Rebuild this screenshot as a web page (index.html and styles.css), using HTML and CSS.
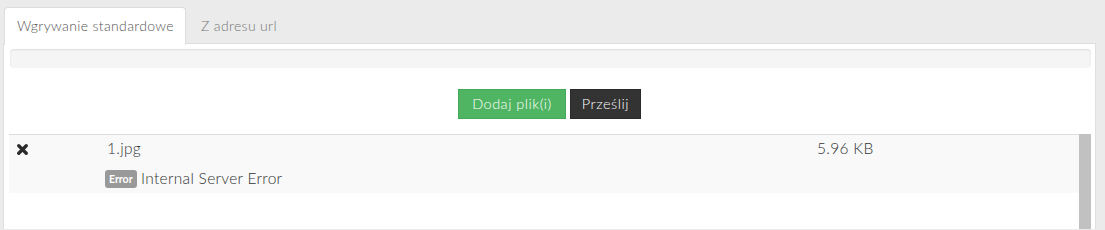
FILE: index.html
```html
<!DOCTYPE html>
<html lang="pl">
<head>
<meta charset="utf-8">
<link rel="stylesheet" href="styles.css">
</head>
<body>
<div class="page">
  <ul class="tabs">
    <li class="tab active">Wgrywanie standardowe</li>
    <li class="tab">Z adresu url</li>
  </ul>
  <div class="panel">
    <div class="progress"></div>
    <div class="actions">
      <button class="btn btn-success">Dodaj plik(i)</button>
      <button class="btn btn-dark">Prześlij</button>
    </div>
    <div class="files">
      <div class="table-wrap">
        <div class="row">
          <div class="cell cell-remove">
            <svg class="remove" viewBox="0 0 10 10" width="11" height="11"><path d="M1.6 1.6 L8.4 8.4 M8.4 1.6 L1.6 8.4" stroke="#2b2b2b" stroke-width="3" stroke-linecap="round"/></svg>
          </div>
          <div class="cell cell-name">
            <div class="name">1.jpg</div>
            <div class="error"><span class="label">Error</span> Internal Server Error</div>
          </div>
          <div class="cell cell-size">5.96 KB</div>
        </div>
      </div>
      <div class="scrollbar"></div>
    </div>
  </div>
</div>
</body>
</html>
```
FILE: styles.css
```css
html, body {
  margin: 0;
  padding: 0;
  background: #ebebeb;
  font-family: "Lato", "Open Sans", sans-serif;
  font-weight: 300;
  color: #333;
}
.page {
  padding: 7px 9px 0 3px;
}
.tabs {
  list-style: none;
  margin: 0;
  padding: 0 0 0 1px;
  display: flex;
  gap: 2px;
  height: 37px;
}
.tab {
  padding: 0 11px 0 12px;
  font-size: 14px;
  letter-spacing: 0.35px;
  line-height: 35px;
  color: #777;
  border: 1px solid transparent;
  border-bottom: none;
  border-radius: 4px 4px 0 0;
}
.tab.active {
  background: #fff;
  color: #555;
  border-color: #ddd;
  height: 37px;
  position: relative;
  z-index: 1;
}
.panel {
  background: #fff;
  border: 1px solid #e0e0e0;
  border-top-color: #ddd;
  border-bottom: none;
  padding: 5px 4px 0 6px;
  height: 180px;
  margin-top: -1px;
}
.progress {
  height: 19px;
  background: #f5f5f5;
  border-radius: 4px;
  box-shadow: inset 0 1px 2px rgba(0,0,0,0.1);
}
.actions {
  display: flex;
  justify-content: center;
  gap: 4px;
  margin-top: 21px;
  margin-left: -2px;
}
.btn {
  font-family: inherit;
  font-weight: 300;
  font-size: 14.5px;
  letter-spacing: 0.5px;
  line-height: 20px;
  padding: 4px 11px;
  border: 1px solid transparent;
  border-radius: 0;
  color: #fff;
  height: 30px;
}
.btn-success {
  background: #50b563;
  border-color: #48a85a;
  padding: 4px 13px;
}
.btn-dark {
  background: #333;
  border-color: #2a2a2a;
}
.files {
  display: flex;
  margin-top: 15px;
  margin-left: -1px;
  height: 100px;
}
.table-wrap {
  flex: 1;
  border-top: 1px solid #ddd;
}
.row {
  display: flex;
  background: #f9f9f9;
  height: 58px;
}
.cell {
  padding: 2px 8px;
  letter-spacing: 0.3px;
}
.cell-remove {
  width: 74px;
  padding-top: 4px;
}
.cell-name {
  width: 696px;
  padding-left: 6px;
}
.name {
  font-size: 15.5px;
  line-height: 22px;
  padding-left: 2px;
}
.error {
  font-size: 15.5px;
  line-height: 22px;
  margin-top: 8px;
}
.label {
  display: inline-block;
  background: #999;
  color: #fff;
  font-size: 10.5px;
  font-weight: bold;
  letter-spacing: 0;
  line-height: 14px;
  padding: 2px 4px 2px 4px;
  border-radius: 3px;
  vertical-align: 1px;
}
.cell-size {
  font-size: 15.5px;
  line-height: 22px;
}
.scrollbar {
  width: 12px;
  background: #c1c1c1;
}
```
